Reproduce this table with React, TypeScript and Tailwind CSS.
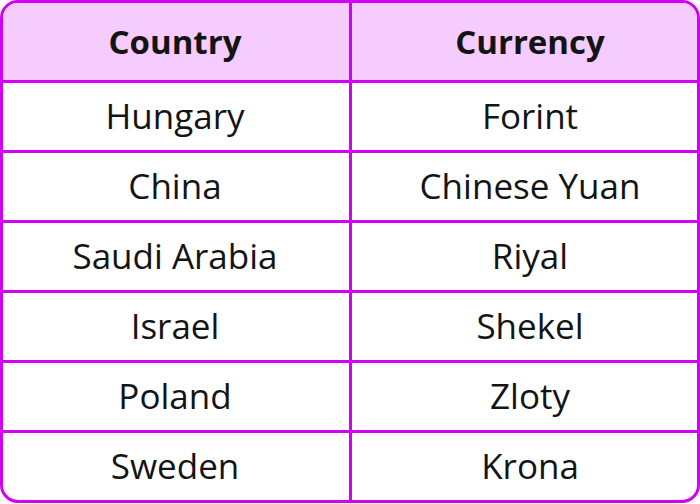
const rows: [string, string][] = [
  ['Hungary', 'Forint'],
  ['China', 'Chinese Yuan'],
  ['Saudi Arabia', 'Riyal'],
  ['Israel', 'Shekel'],
  ['Poland', 'Zloty'],
  ['Sweden', 'Krona'],
];

export default function App() {
  return (
    <div className="w-[700px] h-[504px] bg-white font-['Open_Sans',sans-serif] text-[#141414]">
      <div className="w-[700px] h-[503px] border-[3px] border-[#d400f5] rounded-[18px] overflow-hidden flex flex-col">
        {/* header */}
        <div className="grid grid-cols-[349px_1fr] h-[80px] bg-[#f6cbfd] border-b-[3px] border-[#d400f5]">
          <div className="flex items-center justify-center pr-[2px] border-r-[3px] border-[#d400f5] text-[33px] font-bold">
            Country
          </div>
          <div className="flex items-center justify-center pl-[11px] text-[33px] font-bold">Currency</div>
        </div>

        {rows.map(([country, currency], i) => (
          <div
            key={country}
            className={`grid grid-cols-[349px_1fr] ${
              i < rows.length - 1 ? 'h-[70px] border-b-[3px] border-[#d400f5]' : 'flex-1'
            }`}
          >
            <div className="flex items-center justify-center pr-[2px] border-r-[3px] border-[#d400f5] text-[35px]">
              {country}
            </div>
            <div className="flex items-center justify-center pl-[11px] text-[35px]">{currency}</div>
          </div>
        ))}
      </div>
    </div>
  );
}
